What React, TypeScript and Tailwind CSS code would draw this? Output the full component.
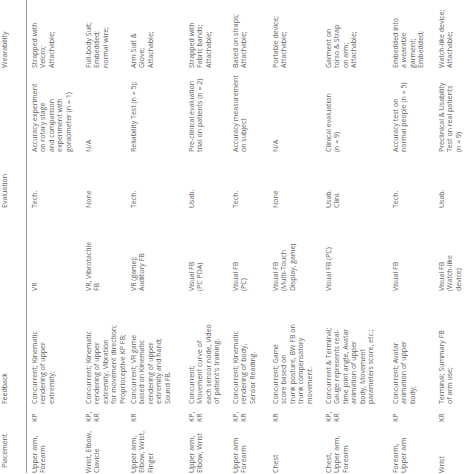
import React from 'react';

type Row = {
  h: string;
  cells: string[][];
};

// column widths, in the table's own (unrotated) frame
const cols = ['w-[51px]', 'w-[18px]', 'w-[113px]', 'w-[83px]', 'w-[56px]', 'w-[84px]', 'w-[68px]'];

const rows: Row[] = [
  {
    h: 'h-[54px]',
    cells: [
      ['Upper arm,', 'Forearm'],
      ['KP'],
      ['Concurrent; Kinematic', 'rendering of upper', 'extremity;'],
      ['VR'],
      ['Tech.'],
      ['Accuracy experiment', 'on rotary stage', 'and comparison', 'experiment with', 'goniometer (n = 1)'],
      ['Strapped with', 'Velcro;', 'Attachable;'],
    ],
  },
  {
    h: 'h-[45px]',
    cells: [
      ['Wrist, Elbow,', 'Clavicle'],
      ['KP,', 'KR'],
      ['Concurrent; Kinematic', 'rendering of upper', 'extremity, Vibration', 'for movement direction;', 'Proprioceptive KP FB;'],
      ['VR, Vibrotactile', 'FB'],
      ['None'],
      ['N/A'],
      ['Full-body Suit;', 'Embedded;', 'normal wire;'],
    ],
  },
  {
    h: 'h-[58px]',
    cells: [
      ['Upper arm,', 'Elbow, Wrist,', 'Finger'],
      ['KR'],
      ['Concurrent; VR game', 'based on Kinematic', 'rendering of upper', 'extremity and hand;', 'Sound FB.'],
      ['VR (game);', 'Auditory FB'],
      ['Tech.'],
      ['Reliability Test (n = 5);'],
      ['Arm Suit &', 'Glove;', 'Attachable;'],
    ],
  },
  {
    h: 'h-[44px]',
    cells: [
      ['Upper arm,', 'Elbow, Wrist'],
      ['KP,', 'KR'],
      ['Concurrent;', 'Movement curve of', 'each sensor node, Video', "of patient's training."],
      ['Visual FB', '(PC PDA)'],
      ['Usab.'],
      ['Pre-clinical evaluation', 'trial on patients (n = 2)'],
      ['Strapped with', 'Fabric bands;', 'Attachable;'],
    ],
  },
  {
    h: 'h-[40px]',
    cells: [
      ['Upper arm', 'Forearm'],
      ['KP,', 'KR'],
      ['Concurrent; Kinematic', 'rendering of body,', 'Sensor Reading.'],
      ['Visual FB', '(PC)'],
      ['Tech.'],
      ['Accuracy measurement', 'on subject'],
      ['Based on straps;', 'Attachable;'],
    ],
  },
  {
    h: 'h-[53px]',
    cells: [
      ['Chest'],
      ['KR'],
      ['Concurrent; Game', 'score based on', 'trunk posture, BW FB on', 'trunk compensatory', 'movement.'],
      ['Visual FB', '(Multi-Touch', 'Display, game)'],
      ['None'],
      ['N/A'],
      ['Portable device;', 'Attachable;'],
    ],
  },
  {
    h: 'h-[67px]',
    cells: [
      ['Chest,', 'Upper arm,', 'Forearm'],
      ['KP,', 'KR'],
      ['Concurrent & Terminal;', 'Gauge represents real-', 'time joint angle, Avatar', 'animation of upper', 'body, Movement', 'parameters score, etc.;'],
      ['Visual FB (PC)'],
      ['Usab.', 'Clini.'],
      ['Clinical evaluation', '(n = 9)'],
      ['Garment on', 'torso & Strap', 'on arm;', 'Attachable;'],
    ],
  },
  {
    h: 'h-[46px]',
    cells: [
      ['Forearm,', 'Upper arm'],
      ['KP'],
      ['Concurrent; Avatar', 'animation of upper', 'body;'],
      ['Visual FB'],
      ['Tech.'],
      ['Accuracy test on', 'normal people (n = 5)'],
      ['Embedded into', 'a wearable', 'garment;', 'Embedded;'],
    ],
  },
  {
    h: 'h-[40px]',
    cells: [
      ['Wrist'],
      ['KR'],
      ['Terminal; Summary FB', 'of arm use;'],
      ['Visual FB', '(Watch-like', 'device)'],
      ['Usab.'],
      ['Preclinical & Usability', 'Test on real patients', '(n = 9)'],
      ['Watch-like device;', 'Attachable;'],
    ],
  },
];

const headers = ['Placement', '', 'Feedback', '', 'Evaluation', '', 'Wearability'];

const Cell: React.FC<{ lines: string[]; w: string }> = ({ lines, w }) => (
  <div className={`${w} shrink-0 whitespace-nowrap`}>
    {lines.map((l, i) => (
      <div key={i}>{l}</div>
    ))}
  </div>
);

export default function App() {
  return (
    <div className="w-[474px] h-[474px] overflow-hidden bg-white">
      <div
        className="w-[474px] h-[474px] -rotate-90 pl-[1px] text-[7px] leading-[8.4px] text-[#606060]"
        style={{ fontFamily: '"Open Sans", "Liberation Sans", sans-serif' }}
      >
        <div className="flex h-[27px] pt-[1px] border-b border-[#9a9a9a]">
          {headers.map((t, i) => (
            <div key={i} className={`${cols[i]} shrink-0 ${i === 0 ? 'pl-[5px]' : ''}`}>
              {t}
            </div>
          ))}
        </div>
        {rows.map((r, ri) => (
          <div key={ri} className={`flex ${r.h} pt-[4px]`}>
            {r.cells.map((c, ci) => (
              <Cell key={ci} lines={c} w={cols[ci]} />
            ))}
          </div>
        ))}
      </div>
    </div>
  );
}
